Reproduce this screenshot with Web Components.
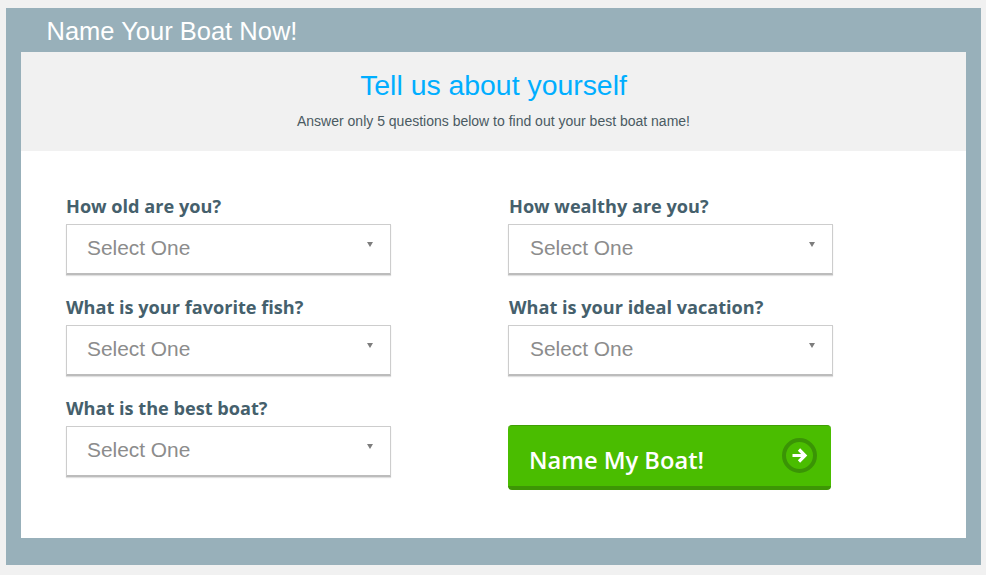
<!DOCTYPE html>
<html lang="en">
<head>
<meta charset="utf-8">
<title>Name Your Boat Now!</title>
<style>
  html, body { margin: 0; background: #f1f1f1; }
  body { padding: 8px 5px 10px 6px; font-family: "Liberation Sans", Arial, sans-serif; }
</style>
</head>
<body>
<boat-panel heading="Name Your Boat Now!">
  <quiz-intro title-text="Tell us about yourself">Answer only 5 questions below to find out your best boat name!</quiz-intro>
  <quiz-form>
    <quiz-select label="How old are you?"></quiz-select>
    <quiz-select label="How wealthy are you?" class="right"></quiz-select>
    <quiz-select label="What is your favorite fish?"></quiz-select>
    <quiz-select label="What is your ideal vacation?" class="right"></quiz-select>
    <quiz-select label="What is the best boat?"></quiz-select>
    <boat-button>Name My Boat!</boat-button>
  </quiz-form>
</boat-panel>

<script>
// outer blue-grey frame with the heading
class BoatPanel extends HTMLElement {
  constructor() {
    super()
    this.attachShadow({mode: 'open'})
    this.shadowRoot.innerHTML = `
      <style>
        :host { display: block; width: 975px; height: 557px; box-sizing: border-box;
                background: #98b0ba; padding: 0 15px 27px; }
        h1 { margin: 0; height: 44px; padding: 10px 0 0 25.500px; box-sizing: border-box;
             font: 400 25.500px/27px "Liberation Sans", Arial, sans-serif; color: #fff; }
        .body { background: #fff; height: 486px; }
      </style>
      <h1>${this.getAttribute('heading')}</h1>
      <div class="body"><slot></slot></div>`
  }
}

class QuizIntro extends HTMLElement {
  constructor() {
    super()
    this.attachShadow({mode: 'open'})
    this.shadowRoot.innerHTML = `
      <style>
        :host { display: block; height: 99px; box-sizing: border-box; background: #f1f1f1;
                padding-top: 17px; text-align: center; }
        h2 { margin: 0; font: 400 28.400px/32px "Liberation Sans", Arial, sans-serif; color: #00aeff; }
        p { margin: 12px 0 0; font: 400 14px/17px "Liberation Sans", Arial, sans-serif; color: #4a5a62; }
      </style>
      <h2>${this.getAttribute('title-text')}</h2>
      <p><slot></slot></p>`
  }
}

class QuizForm extends HTMLElement {
  constructor() {
    super()
    this.attachShadow({mode: 'open'})
    this.shadowRoot.innerHTML = `
      <style>
        :host { display: grid; grid-template-columns: 325px 325px; column-gap: 117px;
                grid-auto-rows: 101px; padding: 43px 0 0 45px; }
      </style>
      <slot></slot>`
  }
}

// label + fake select box
class QuizSelect extends HTMLElement {
  constructor() {
    super()
    this.attachShadow({mode: 'open'})
    this.shadowRoot.innerHTML = `
      <style>
        :host { display: block; }
        :host(.right) label { padding-left: 1px; }
        :host(.right) .box { padding-left: 21px; }
        label { display: block; height: 30px; font: 700 18.150px/25px "Open Sans", sans-serif;
                color: #45606c; white-space: nowrap; }
        .box { display: flex; justify-content: space-between; box-sizing: border-box;
               height: 51px; padding: 0 17px 0 20px; background: #fff;
               border: 1px solid #cdcdcd; border-bottom: 2px solid #bcbcbc; box-shadow: 0 1px 1px #e0e0e0; }
        .val { font: 400 20.900px/46px "Liberation Sans", Arial, sans-serif; color: #8c8c8c; }
        svg { margin-top: 17px; }
      </style>
      <label>${this.getAttribute('label')}</label>
      <div class="box">
        <span class="val">Select One</span>
        <svg width="6" height="5" viewBox="0 0 6 5"><path d="M0 0h6L3 5z" fill="#7d7d7d"/></svg>
      </div>`
  }
}

class BoatButton extends HTMLElement {
  constructor() {
    super()
    this.attachShadow({mode: 'open'})
    this.shadowRoot.innerHTML = `
      <style>
        :host { display: flex; align-items: center; justify-content: space-between; box-sizing: border-box;
                width: 323px; height: 65px; margin-top: 29px; padding: 0 14px 0 21px;
                background: #4abd00; border-top: 1px solid #3f9f04; border-bottom: 4px solid #3d9605;
                border-radius: 4px; color: #fff; font: 600 23.700px/1 "Open Sans", sans-serif; }
        span { margin-top: 10px; }
        svg { margin-top: -2px; }
      </style>
      <span><slot></slot></span>
      <svg width="35" height="35" viewBox="0 0 35 35">
        <circle cx="17.500" cy="17.500" r="15.500" fill="none" stroke="#3a9405" stroke-width="4"/>
        <path d="M10.500 17.500h12M17 11.500l6 6-6 6" fill="none" stroke="#fff" stroke-width="3.200"/>
      </svg>`
  }
}

customElements.define('boat-panel', BoatPanel)
customElements.define('quiz-intro', QuizIntro)
customElements.define('quiz-form', QuizForm)
customElements.define('quiz-select', QuizSelect)
customElements.define('boat-button', BoatButton)
</script>
</body>
</html>
